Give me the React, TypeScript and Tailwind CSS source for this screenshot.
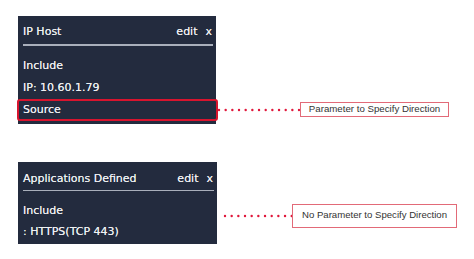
import React from 'react'

function Dots({ width, start, count }: { width: number; start: number; count: number }) {
  const xs = Array.from({ length: count }, (_, i) => start + i * 6.67)
  return (
    <svg width={width} height={4} className="block shrink-0">
      {xs.map((x, i) => (
        <circle key={i} cx={x} cy={2} r={1.2} fill="#e0163a" />
      ))}
    </svg>
  )
}

function Header({ title }: { title: string }) {
  return (
    <div className="flex items-center justify-between pl-[5px] pr-[4px] leading-[14px]">
      <span>{title}</span>
      <span className="flex gap-[8px]">
        <span>edit</span>
        <span>x</span>
      </span>
    </div>
  )
}

export default function App() {
  return (
    <div
      className="w-[474px] h-[259px] bg-white overflow-hidden pl-[18px] pt-[16px] text-[11px] text-[#eef0f3]"
      style={{ fontFamily: '"DejaVu Sans", Verdana, sans-serif' }}
    >
      <div className="flex items-start">
        <div className="w-[198px] bg-[#232b3e] pt-[9px] pb-[3px] flex flex-col [text-shadow:0_0_0.6px_rgba(255,255,255,0.8)]">
          <Header title="IP Host" />
          <div className="mt-[5px] ml-[5px] mr-[3px] h-[1.5px] bg-[#a9afbb]" />
          <div className="mt-[13px] pl-[5px] leading-[14px]">Include</div>
          <div className="mt-[8px] pl-[5px] leading-[14px]">IP: 10.60.1.79</div>
          <div className="mt-[4px] ml-[-1px] mr-[-2px] border-2 border-[#d8142e] rounded-[3px] pl-[4px] pt-[2px] pb-[2px] leading-[14px]">
            Source
          </div>
        </div>
        <div className="flex items-center mt-[86px]">
          <Dots width={84} start={3} count={13} />
          <div
            className="w-[149px] h-[15px] border border-[#e26a78] bg-white flex items-center justify-center text-[9.7px] text-[#333333]"
            style={{ fontFamily: '"Liberation Sans", Arial, sans-serif' }}
          >
            Parameter to Specify Direction
          </div>
        </div>
      </div>

      <div className="flex items-start mt-[38px]">
        <div className="w-[199px] bg-[#232b3e] pt-[10px] pb-[5px] flex flex-col [text-shadow:0_0_0.6px_rgba(255,255,255,0.8)]">
          <Header title="Applications Defined" />
          <div className="mt-[4px] ml-[5px] mr-[3px] h-[1.5px] bg-[#a9afbb]" />
          <div className="mt-[13px] pl-[5px] leading-[14px]">Include</div>
          <div className="mt-[7px] pl-[5px] leading-[14px]">: HTTPS(TCP 443)</div>
        </div>
        <div className="flex items-center mt-[42px]">
          <Dots width={75} start={8} count={11} />
          <div
            className="w-[165px] h-[24px] border border-[#e26a78] bg-white flex items-center justify-center text-[9.6px] text-[#333333]"
            style={{ fontFamily: '"Liberation Sans", Arial, sans-serif' }}
          >
            No Parameter to Specify Direction
          </div>
        </div>
      </div>
    </div>
  )
}
